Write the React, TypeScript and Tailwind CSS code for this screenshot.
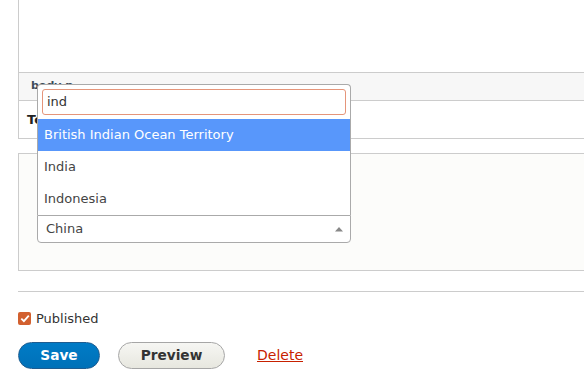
import React from "react";

const results = ["British Indian Ocean Territory", "India", "Indonesia"];

function CountrySelect() {
  return (
    <div className="relative w-[314px]">
      <div className="absolute bottom-full left-0 w-full rounded-t-[4px] border border-b-0 border-[#aaa] bg-white">
        <div className="p-[4px]">
          <div className="flex h-[26px] items-center rounded-[3px] border border-[#e5957a] px-[4px] text-[13px] text-[#333]">
            ind
          </div>
        </div>
        <ul>
          {results.map((r, i) => (
            <li
              key={r}
              className={
                i === 0
                  ? "flex h-[32px] items-center bg-[#5897fb] px-[6px] text-[13px] text-white"
                  : "flex h-[32px] items-center px-[6px] text-[13px] text-[#444]"
              }
            >
              {r}
            </li>
          ))}
        </ul>
      </div>
      <div className="flex h-[28px] items-center justify-between rounded-b-[4px] border border-[#aaa] bg-white pl-[8px] pr-[6px] text-[13px] text-[#444]">
        <span>China</span>
        <svg width="10" height="6" viewBox="0 0 10 6">
          <path d="M1 5.5 L5 1 L9 5.5 Z" fill="#888" />
        </svg>
      </div>
    </div>
  );
}

export default function App() {
  return (
    <div className="relative h-[375px] w-[584px] overflow-hidden bg-white pl-[18px] font-['DejaVu_Sans',sans-serif] text-[#333]">
      <div className="w-[620px] border-l border-[#ccc]">
        <div className="h-[72px] bg-white" />
        <div className="flex h-[29px] items-center border-y border-[#ccc] bg-[#f7f7f7] pl-[12px] text-[11px] font-bold text-[#3c4b5a]">
          body p
        </div>
        <div className="flex h-[38px] items-center border-b border-[#ccc] pl-[8px] text-[13px] font-bold text-[#222]">
          Text format
        </div>
      </div>

      <div className="mt-[14px] h-[118px] w-[620px] border border-[#ccc] bg-[#fcfcfa] pl-[18px] pt-[61px]">
        <CountrySelect />
      </div>

      <div className="mt-[20px] w-[620px] border-t border-[#ccc]" />

      <label className="mt-[17px] flex items-center gap-[5px] text-[13px] text-[#333]">
        <span className="flex h-[13px] w-[13px] items-center justify-center rounded-[2px] bg-[#d2602f]">
          <svg width="10" height="9" viewBox="0 0 10 9">
            <path d="M1.3 4.6 L3.9 7.2 L8.8 1.6" fill="none" stroke="#fff" strokeWidth="1.8" />
          </svg>
        </span>
        Published
      </label>

      <div className="mt-[13px] flex items-center">
        <button
          type="button"
          className="h-[27px] w-[82px] rounded-full border border-[#1e5c90] bg-gradient-to-b from-[#007bc6] to-[#0071b8] text-[13.7px] font-bold text-white"
        >
          Save
        </button>
        <button
          type="button"
          className="ml-[18px] h-[27px] w-[107px] rounded-full border border-[#a6a6a6] bg-gradient-to-b from-[#f6f6f3] to-[#e7e7df] text-[13.7px] font-bold text-[#333]"
        >
          Preview
        </button>
        <a href="#" className="ml-[32px] text-[14px] text-[#c72100] underline">
          Delete
        </a>
      </div>
    </div>
  );
}
